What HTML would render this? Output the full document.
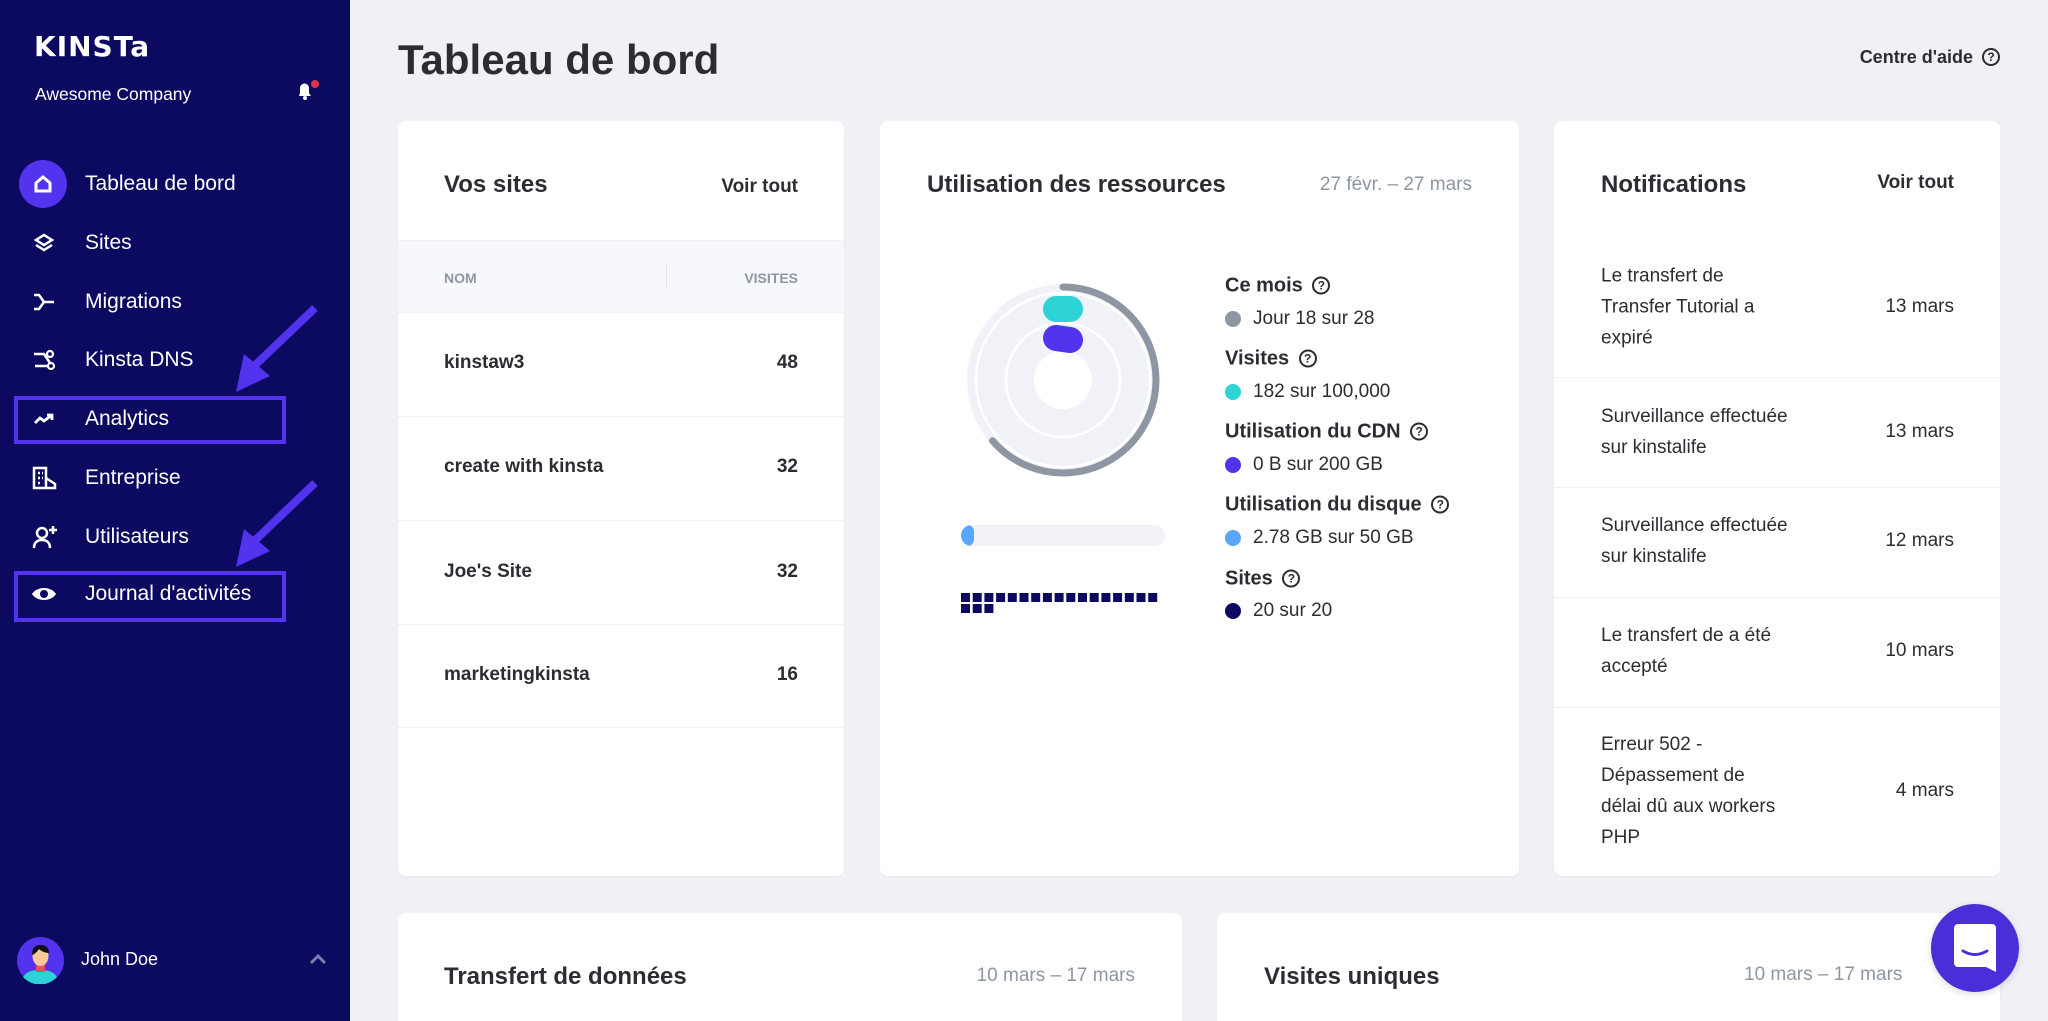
<!DOCTYPE html>
<html style="width:2048px;height:1021px;overflow:hidden"><head><meta charset="utf-8"><style>
*{margin:0;padding:0;box-sizing:border-box}
body{width:2048px;height:1021px;overflow:hidden;background:#f0f1f6;font-family:"Liberation Sans",sans-serif;color:#2c2d33;position:relative}
.a{position:absolute}
.sb{left:0;top:0;width:350px;height:1021px;background:#0b0a60;color:#fff}
.nav{left:85px;font-size:21px;color:#fff;transform:translateY(-50%)}
.card{background:#fff;border-radius:8px;box-shadow:0 1px 3px rgba(0,0,0,.04)}
.h{font-size:24px;font-weight:bold;transform:translateY(-50%)}
.r{text-align:right;transform:translateY(-50%)}
.row{font-size:19px;font-weight:bold;transform:translateY(-50%)}
.sep{height:1px;background:#eef0f4}
.lab{left:1225px;font-size:20px;font-weight:bold;transform:translateY(-50%);white-space:nowrap}
.val{left:1253px;font-size:19px;transform:translateY(-50%);white-space:nowrap}
.dot{left:1225px;width:16px;height:16px;border-radius:50%;transform:translateY(-50%)}
.q{display:inline-block;width:18px;height:18px;border:2px solid #2c2d33;border-radius:50%;font-size:12px;text-align:center;line-height:14px;vertical-align:2px;margin-left:4px;font-weight:bold}
.nt{left:1601px;font-size:19px;line-height:31px;transform:translateY(-50%)}
.nd{right:94px;font-size:19px;transform:translateY(-50%)}
</style></head><body>
<div class="a sb">
<div class="a" style="left:34px;top:30px;font-size:28px;font-weight:bold;letter-spacing:1px;font-family:'DejaVu Sans',sans-serif">KINSTa</div>
<div class="a" style="left:35px;top:84px;font-size:17.5px">Awesome Company</div>
<svg class="a" style="left:296px;top:80px" width="24" height="22"><path d="M3 16h12l-2-3V8a4.5 4.5 0 0 0-9 0v5z" fill="#fff"/><circle cx="9" cy="18" r="2" fill="#fff"/><circle cx="19" cy="4" r="4" fill="#e0324d"/></svg>
<div class="a" style="left:19px;top:160px;width:48px;height:48px;border-radius:50%;background:#5333ed"></div>
<svg class="a" style="left:34px;top:175px" width="18" height="18"><path d="M2 8L9 2l7 6v8H2z" fill="none" stroke="#fff" stroke-width="3"/></svg>
<div class="a nav" style="top:184px">Tableau de bord</div>
<svg class="a" style="left:33px;top:233px" width="22" height="20"><path d="M11 2l8 5-8 5-8-5z" fill="none" stroke="#fff" stroke-width="2.5"/><path d="M3 12l8 5 8-5" fill="none" stroke="#fff" stroke-width="2.5"/></svg>
<div class="a nav" style="top:243px">Sites</div>
<svg class="a" style="left:32px;top:292px" width="24" height="20"><path d="M2 3h5l5 7h10M2 17h5l5-7" fill="none" stroke="#fff" stroke-width="2.5"/></svg>
<div class="a nav" style="top:302px">Migrations</div>
<svg class="a" style="left:32px;top:349px" width="24" height="22"><path d="M2 5h10l8 12H3" fill="none" stroke="#fff" stroke-width="2.5"/><circle cx="18" cy="5" r="3" fill="none" stroke="#fff" stroke-width="2.2"/><circle cx="19" cy="17" r="3" fill="#0b0a60" stroke="#fff" stroke-width="2.2"/></svg>
<div class="a nav" style="top:360px">Kinsta DNS</div>
<svg class="a" style="left:33px;top:411px" width="22" height="16"><path d="M2 12l5-5 4 3 8-6M14 4h5v5" fill="none" stroke="#fff" stroke-width="2.8"/></svg>
<div class="a nav" style="top:419px">Analytics</div>
<svg class="a" style="left:32px;top:466px" width="26" height="24"><path d="M2 2h12v20H2zM14 12l9 6v4h-9" fill="none" stroke="#fff" stroke-width="2.5"/><path d="M6 7h2M10 7h1M6 12h2M10 12h1M6 17h2" stroke="#fff" stroke-width="2.5"/></svg>
<div class="a nav" style="top:478px">Entreprise</div>
<svg class="a" style="left:32px;top:525px" width="26" height="24"><circle cx="10" cy="8" r="5" fill="none" stroke="#fff" stroke-width="2.5"/><path d="M2 23c0-6 4-8 8-8s8 2 8 8" fill="none" stroke="#fff" stroke-width="2.5"/><path d="M21 1v8M17 5h8" stroke="#fff" stroke-width="2.5"/></svg>
<div class="a nav" style="top:537px">Utilisateurs</div>
<svg class="a" style="left:31px;top:586px" width="26" height="16"><path d="M1 8C6 0 20 0 25 8 20 16 6 16 1 8z" fill="#fff"/><circle cx="13" cy="8" r="4" fill="#0b0a60"/></svg>
<div class="a nav" style="top:594px">Journal d'activités</div>
<div class="a" style="left:14px;top:396px;width:272px;height:48px;border:4px solid #5333ed"></div>
<div class="a" style="left:14px;top:571px;width:272px;height:51px;border:4px solid #5333ed"></div>
<svg class="a" style="left:0;top:0" width="350" height="650"><path d="M315 308L248 372" stroke="#5333ed" stroke-width="8"/><path d="M236 392l8-38 26 22z" fill="#5333ed"/><path d="M315 483L248 547" stroke="#5333ed" stroke-width="8"/><path d="M236 567l8-38 26 22z" fill="#5333ed"/></svg>
<svg class="a" style="left:17px;top:937px" width="47" height="47"><circle cx="23.5" cy="23.5" r="23.5" fill="#5333ed"/><path d="M6 40c4-6 10-7 17-7s13 1 17 7a23 23 0 0 1-34 0z" fill="#2ed3d8"/><rect x="19" y="26" width="9" height="9" fill="#e7506c"/><ellipse cx="23.5" cy="19" rx="8" ry="10" fill="#fcc89b"/><path d="M15 18c0-8 4-10 9-10s8 3 8 8c-4 0-8-2-10-4-2 3-4 5-7 6z" fill="#111"/></svg>
<div class="a" style="left:81px;top:949px;font-size:18px">John Doe</div>
<svg class="a" style="left:309px;top:953px" width="18" height="12"><path d="M2 10l7-7 7 7" fill="none" stroke="#7c7ab5" stroke-width="3"/></svg>
</div>

<div class="a" style="left:398px;top:36px;font-size:42px;font-weight:bold;color:#2c2d33">Tableau de bord</div>
<div class="a" style="right:48px;top:47px;font-size:18px;font-weight:bold">Centre d'aide <span class="q">?</span></div>

<div class="a card" style="left:398px;top:121px;width:446px;height:755px;overflow:hidden">
<div class="a h" style="left:46px;top:64px">Vos sites</div>
<div class="a r" style="right:46px;top:66px;font-size:19px;font-weight:bold">Voir tout</div>
<div class="a" style="left:0;top:119px;width:446px;height:73px;background:#f7f8fb;border-top:1px solid #eef0f4;border-bottom:1px solid #eef0f4"></div>
<div class="a" style="left:46px;top:149px;font-size:14px;color:#8e96a3;font-weight:bold">NOM</div>
<div class="a" style="left:268px;top:143px;width:1px;height:24px;background:#e3e5ea"></div>
<div class="a" style="right:46px;top:149px;font-size:14px;color:#8e96a3;font-weight:bold">VISITES</div>
<div class="a row" style="left:46px;top:242px">kinstaw3</div><div class="a row r" style="right:46px;top:242px">48</div>
<div class="a sep" style="left:0;top:295px;width:446px"></div>
<div class="a row" style="left:46px;top:346px">create with kinsta</div><div class="a row r" style="right:46px;top:346px">32</div>
<div class="a sep" style="left:0;top:399px;width:446px"></div>
<div class="a row" style="left:46px;top:451px">Joe's Site</div><div class="a row r" style="right:46px;top:451px">32</div>
<div class="a sep" style="left:0;top:503px;width:446px"></div>
<div class="a row" style="left:46px;top:554px">marketingkinsta</div><div class="a row r" style="right:46px;top:554px">16</div>
<div class="a sep" style="left:0;top:606px;width:446px"></div>
</div>

<div class="a card" style="left:880px;top:121px;width:639px;height:755px"></div>
<div class="a h" style="left:927px;top:185px">Utilisation des ressources</div>
<div class="a r" style="right:576px;top:185px;font-size:19px;color:#8e96a3">27 févr. – 27 mars</div>
<svg class="a" style="left:963px;top:280px" width="200" height="200">
<g transform="translate(100,100)">
<circle r="96" fill="#f1f2f7"/>
<circle r="87" fill="none" stroke="#fff" stroke-width="2.5"/>
<circle r="57" fill="none" stroke="#fff" stroke-width="2.5"/>
<circle r="29" fill="#fff"/>
<path d="M0 -93A93 93 0 1 1 -70.5 60.7" fill="none" stroke="#8e96a3" stroke-width="7" stroke-linecap="round"/>
<path d="M-7 -71L7 -71" stroke="#2ed3d8" stroke-width="26" stroke-linecap="round"/>
<path d="M-7 -42L7 -40" stroke="#5333ed" stroke-width="26" stroke-linecap="round"/>
</g></svg>
<div class="a" style="left:961px;top:525px;width:204px;height:21px;border-radius:11px;background:#f1f2f7;overflow:hidden"><div style="width:13px;height:21px;background:#5aa5fd;border-radius:10px"></div></div>
<svg class="a" style="left:961px;top:593px" width="210" height="24" fill="#0b0a60">
<rect x="0" y="0" width="9" height="9"/><rect x="11.7" y="0" width="9" height="9"/><rect x="23.4" y="0" width="9" height="9"/><rect x="35.1" y="0" width="9" height="9"/><rect x="46.8" y="0" width="9" height="9"/><rect x="58.5" y="0" width="9" height="9"/><rect x="70.2" y="0" width="9" height="9"/><rect x="81.9" y="0" width="9" height="9"/><rect x="93.6" y="0" width="9" height="9"/><rect x="105.3" y="0" width="9" height="9"/><rect x="117" y="0" width="9" height="9"/><rect x="128.7" y="0" width="9" height="9"/><rect x="140.4" y="0" width="9" height="9"/><rect x="152.1" y="0" width="9" height="9"/><rect x="163.8" y="0" width="9" height="9"/><rect x="175.5" y="0" width="9" height="9"/><rect x="187.2" y="0" width="9" height="9"/>
<rect x="0" y="11" width="9" height="9"/><rect x="11.7" y="11" width="9" height="9"/><rect x="23.4" y="11" width="9" height="9"/></svg>
<div class="a lab" style="top:286px">Ce mois <span class="q">?</span></div>
<div class="a dot" style="top:319px;background:#8e96a3"></div><div class="a val" style="top:319px">Jour 18 sur 28</div>
<div class="a lab" style="top:359px">Visites <span class="q">?</span></div>
<div class="a dot" style="top:392px;background:#2ed3d8"></div><div class="a val" style="top:392px">182 sur 100,000</div>
<div class="a lab" style="top:432px">Utilisation du CDN <span class="q">?</span></div>
<div class="a dot" style="top:465px;background:#5333ed"></div><div class="a val" style="top:465px">0 B sur 200 GB</div>
<div class="a lab" style="top:505px">Utilisation du disque <span class="q">?</span></div>
<div class="a dot" style="top:538px;background:#5aa5fd"></div><div class="a val" style="top:538px">2.78 GB sur 50 GB</div>
<div class="a lab" style="top:579px">Sites <span class="q">?</span></div>
<div class="a dot" style="top:611px;background:#0b0a60"></div><div class="a val" style="top:611px">20 sur 20</div>

<div class="a card" style="left:1554px;top:121px;width:446px;height:755px"></div>
<div class="a h" style="left:1601px;top:185px">Notifications</div>
<div class="a r" style="right:94px;top:183px;font-size:19px;font-weight:bold">Voir tout</div>
<div class="a nt" style="top:307px">Le transfert de<br>Transfer Tutorial a<br>expiré</div><div class="a nd" style="top:307px">13 mars</div>
<div class="a sep" style="left:1554px;top:377px;width:446px"></div>
<div class="a nt" style="top:432px">Surveillance effectuée<br>sur kinstalife</div><div class="a nd" style="top:432px">13 mars</div>
<div class="a sep" style="left:1554px;top:487px;width:446px"></div>
<div class="a nt" style="top:541px">Surveillance effectuée<br>sur kinstalife</div><div class="a nd" style="top:541px">12 mars</div>
<div class="a sep" style="left:1554px;top:597px;width:446px"></div>
<div class="a nt" style="top:651px">Le transfert de a été<br>accepté</div><div class="a nd" style="top:651px">10 mars</div>
<div class="a sep" style="left:1554px;top:707px;width:446px"></div>
<div class="a nt" style="top:791px">Erreur 502 -<br>Dépassement de<br>délai dû aux workers<br>PHP</div><div class="a nd" style="top:791px">4 mars</div>

<div class="a card" style="left:398px;top:913px;width:784px;height:108px;border-radius:8px 8px 0 0"></div>
<div class="a h" style="left:444px;top:977px">Transfert de données</div>
<div class="a r" style="right:913px;top:976px;font-size:19px;color:#8e96a3">10 mars – 17 mars</div>
<div class="a card" style="left:1217px;top:913px;width:783px;height:108px;border-radius:8px 8px 0 0"></div>
<div class="a h" style="left:1264px;top:977px">Visites uniques</div>
<div class="a" style="left:1744px;top:964px;font-size:19px;color:#8e96a3">10 mars – 17 mars</div>
<div class="a" style="left:1931px;top:904px;width:88px;height:88px;border-radius:50%;background:#4a2fd8;box-shadow:0 2px 8px rgba(0,0,0,.15)"></div>
<svg class="a" style="left:1954px;top:924px" width="42" height="48"><path d="M4 0h34a4 4 0 0 1 4 4v44l-10-5H4a4 4 0 0 1-4-4V4a4 4 0 0 1 4-4z" fill="#fff"/><path d="M9 27q12 7 24 0" fill="none" stroke="#4a2fd8" stroke-width="3" stroke-linecap="round"/></svg>
</body></html>
